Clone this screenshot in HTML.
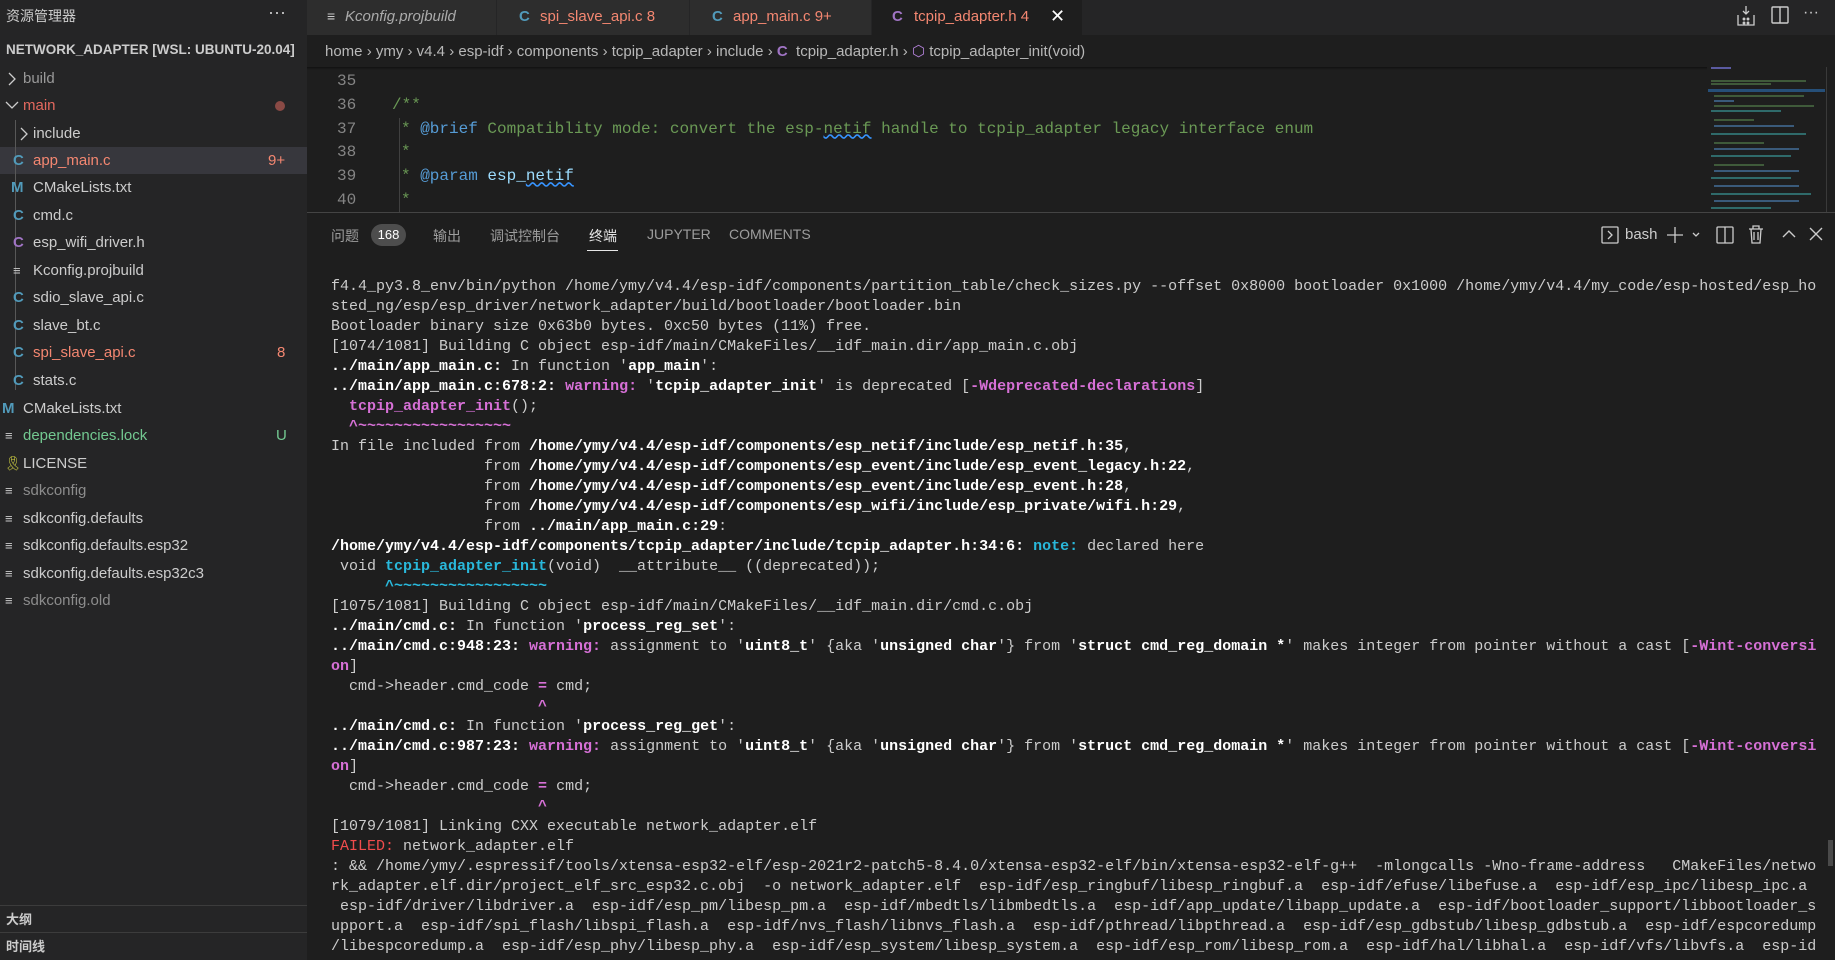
<!DOCTYPE html>
<html><head><meta charset="utf-8"><style>
*{margin:0;padding:0;box-sizing:border-box}
body{width:1835px;height:960px;background:#1e1e1e;position:relative;overflow:hidden;font-family:"Liberation Sans","Noto Sans CJK SC",sans-serif;color:#ccc}
.a{position:absolute;white-space:pre}
#side{position:absolute;left:0;top:0;width:307px;height:960px;background:#252526}
.it{position:absolute;height:27px;line-height:27px;font-size:15px;white-space:pre}
.ic{position:absolute;font-weight:bold;font-size:15px}
.mono{font-family:"Liberation Mono",monospace}
#term{position:absolute;left:331px;top:277px;font-family:"Liberation Mono",monospace;font-size:15px;line-height:20px;color:#cccccc}
#term div{white-space:pre;height:20px}
b{color:#fff}
.w{color:#d670d6;font-weight:bold}
.n{color:#29b8db;font-weight:bold}
.r{color:#f14c4c}
.tab{position:absolute;top:0;height:35px;line-height:33px;font-size:15px;background:#2d2d2d;border-right:1px solid #252526}
.pt{position:absolute;top:226px;font-size:14px;color:#9d9d9d}
.mm{position:absolute;height:2px}
.chev{position:absolute}
</style></head><body>
<div style="position:absolute;left:307px;top:0;width:1528px;height:35px;background:#252526"></div>
<div class="tab" style="left:307px;width:190px"><span class="a" style="left:20px;color:#ccc;font-size:14px">≡</span><span class="a" style="left:38px;font-style:italic;color:#aaa">Kconfig.projbuild</span></div>
<div class="tab" style="left:497px;width:193px"><span class="a" style="left:22px;color:#519aba;font-weight:bold">C</span><span class="a" style="left:43px;color:#f48771">spi_slave_api.c 8</span></div>
<div class="tab" style="left:690px;width:182px"><span class="a" style="left:22px;color:#519aba;font-weight:bold">C</span><span class="a" style="left:43px;color:#f48771">app_main.c 9+</span></div>
<div class="tab" style="left:872px;width:211px;background:#1e1e1e"><span class="a" style="left:20px;color:#a074c4;font-weight:bold">C</span><span class="a" style="left:42px;color:#f48771">tcpip_adapter.h 4</span><span class="a" style="left:178px;color:#fff;font-size:18px">✕</span></div>
<svg class="a" style="left:1736px;top:5px" width="20" height="22" viewBox="0 0 20 22" fill="none" stroke="#ccc" stroke-width="1.3"><path d="M10 1v8M7 6l3 3 3-3M2 10v10h16V10"/><circle cx="8" cy="14" r=".8" fill="#ccc"/><circle cx="12" cy="14" r=".8" fill="#ccc"/><circle cx="8" cy="18" r=".8" fill="#ccc"/><circle cx="12" cy="18" r=".8" fill="#ccc"/></svg>
<svg class="a" style="left:1771px;top:6px" width="18" height="18" viewBox="0 0 18 18" fill="none" stroke="#ccc" stroke-width="1.4"><rect x="1" y="1" width="16" height="16" rx="1"/><path d="M9 1v16"/></svg>
<div class="a" style="left:1803px;top:4px;font-size:16px;color:#ccc">···</div>
<div class="a" style="left:325px;top:42px;font-size:15px;color:#b8b8b8">home › ymy › v4.4 › esp-idf › components › tcpip_adapter › include › <span style="color:#a074c4;font-weight:bold">C</span>  tcpip_adapter.h › <span style="color:#b180d7">⬡</span> tcpip_adapter_init(void)</div>
<div style="position:absolute;left:307px;top:67px;width:1400px;height:3px;background:linear-gradient(#111,#1e1e1e)"></div>
<div class="mono" style="position:absolute;left:307px;top:70px;font-size:16px;line-height:23.8px;color:#858585">
<div class="a" style="left:30px;top:0">35</div>
<div class="a" style="left:30px;top:23.8px">36</div>
<div class="a" style="left:30px;top:47.6px">37</div>
<div class="a" style="left:30px;top:71.4px">38</div>
<div class="a" style="left:30px;top:95.2px">39</div>
<div class="a" style="left:30px;top:119px">40</div>
<div class="a" style="left:85px;top:23.8px;color:#6a9955">/**</div>
<div class="a" style="left:94px;top:47.6px;color:#6a9955">* <span style="color:#569cd6">@brief</span> Compatiblity mode: convert the esp-<span style="text-decoration:underline wavy #3794ff">netif</span> handle to tcpip_adapter legacy interface enum</div>
<div class="a" style="left:94px;top:71.4px;color:#6a9955">*</div>
<div class="a" style="left:94px;top:95.2px;color:#6a9955">* <span style="color:#569cd6">@param</span> <span style="color:#9cdcfe">esp_<span style="text-decoration:underline wavy #3794ff">netif</span></span></div>
<div class="a" style="left:94px;top:119px;color:#6a9955">*</div>
</div>
<div style="position:absolute;left:399px;top:118px;width:1px;height:94px;background:#404040"></div>
<div style="position:absolute;left:1708px;top:67px;width:127px;height:145px;background:#1e1e1e">
<div class="mm" style="left:3px;top:0;width:20px;background:#5a5aa0"></div>
<div class="mm" style="left:3px;top:13px;width:95px;background:#3f5a3a"></div>
<div class="mm" style="left:3px;top:16px;width:60px;background:#3f5a3a"></div>
<div class="mm" style="left:0;top:22px;width:117px;height:3px;background:#264f78"></div>
<div class="mm" style="left:6px;top:28px;width:90px;background:#3f5a3a"></div>
<div class="mm" style="left:6px;top:33px;width:20px;background:#3a5a7a"></div>
<div class="mm" style="left:6px;top:38px;width:100px;background:#3f5a3a"></div>
<div class="mm" style="left:3px;top:43px;width:70px;background:#2f6a6a"></div>
<div class="mm" style="left:6px;top:52px;width:40px;background:#3f5a3a"></div>
<div class="mm" style="left:6px;top:58px;width:80px;background:#3a5a7a"></div>
<div class="mm" style="left:3px;top:66px;width:95px;background:#2f6a6a"></div>
<div class="mm" style="left:6px;top:75px;width:50px;background:#3f5a3a"></div>
<div class="mm" style="left:6px;top:81px;width:85px;background:#3a5a7a"></div>
<div class="mm" style="left:3px;top:88px;width:80px;background:#2f6a6a"></div>
<div class="mm" style="left:6px;top:97px;width:50px;background:#3f5a3a"></div>
<div class="mm" style="left:6px;top:103px;width:85px;background:#3a5a7a"></div>
<div class="mm" style="left:3px;top:110px;width:80px;background:#2f6a6a"></div>
<div class="mm" style="left:6px;top:118px;width:85px;background:#3a5a7a"></div>
<div class="mm" style="left:3px;top:126px;width:100px;background:#2f6a6a"></div>
<div class="mm" style="left:6px;top:133px;width:85px;background:#3a5a7a"></div>
<div class="mm" style="left:3px;top:140px;width:60px;background:#2f6a6a"></div>
<div style="position:absolute;left:118px;top:0;width:1px;height:145px;background:#3a3a3a"></div>
</div>
<div style="position:absolute;left:307px;top:212px;width:1528px;height:1px;background:#444"></div>
<div class="pt" style="left:331px">问题</div>
<div class="a" style="left:371px;top:224px;width:35px;height:22px;border-radius:11px;background:#4d4d4d;color:#fff;font-size:13px;line-height:22px;text-align:center">168</div>
<div class="pt" style="left:433px">输出</div>
<div class="pt" style="left:490px">调试控制台</div>
<div class="pt" style="left:589px;color:#e7e7e7">终端</div>
<div style="position:absolute;left:587px;top:250px;width:31px;height:1px;background:#e7e7e7"></div>
<div class="pt" style="left:647px">JUPYTER</div>
<div class="pt" style="left:729px">COMMENTS</div>
<svg class="a" style="left:1601px;top:226px" width="18" height="18" viewBox="0 0 18 18" fill="none" stroke="#ccc" stroke-width="1.3"><rect x="1" y="1" width="16" height="16" rx="1"/><path d="M7 5l4 4-4 4"/></svg>
<div class="a" style="left:1625px;top:226px;font-size:15px;color:#ccc">bash</div>
<svg class="a" style="left:1666px;top:226px" width="40" height="18" viewBox="0 0 40 18" fill="none" stroke="#ccc" stroke-width="1.3"><path d="M9 1v16M1 9h16M27 7l3 3 3-3"/></svg>
<svg class="a" style="left:1716px;top:226px" width="18" height="18" viewBox="0 0 18 18" fill="none" stroke="#ccc" stroke-width="1.3"><rect x="1" y="1" width="16" height="16" rx="1"/><path d="M9 1v16"/></svg>
<svg class="a" style="left:1748px;top:225px" width="16" height="19" viewBox="0 0 16 19" fill="none" stroke="#ccc" stroke-width="1.3"><path d="M1 4h14M5 4V1h6v3M3 4l1 14h8l1-14M6 7v8M10 7v8"/></svg>
<svg class="a" style="left:1781px;top:228px" width="16" height="12" viewBox="0 0 16 12" fill="none" stroke="#ccc" stroke-width="1.4"><path d="M2 9l6-6 6 6"/></svg>
<svg class="a" style="left:1809px;top:227px" width="14" height="14" viewBox="0 0 14 14" fill="none" stroke="#ccc" stroke-width="1.4"><path d="M1 1l12 12M13 1L1 13"/></svg>
<div style="position:absolute;left:1828px;top:840px;width:5px;height:26px;background:#4a4a4a"></div>
<div id="term">
<div>f4.4_py3.8_env/bin/python /home/ymy/v4.4/esp-idf/components/partition_table/check_sizes.py --offset 0x8000 bootloader 0x1000 /home/ymy/v4.4/my_code/esp-hosted/esp_ho</div>
<div>sted_ng/esp/esp_driver/network_adapter/build/bootloader/bootloader.bin</div>
<div>Bootloader binary size 0x63b0 bytes. 0xc50 bytes (11%) free.</div>
<div>[1074/1081] Building C object esp-idf/main/CMakeFiles/__idf_main.dir/app_main.c.obj</div>
<div><b>../main/app_main.c:</b> In function '<b>app_main</b>':</div>
<div><b>../main/app_main.c:678:2:</b> <span class="w">warning:</span> '<b>tcpip_adapter_init</b>' is deprecated [<span class="w">-Wdeprecated-declarations</span>]</div>
<div>  <span class="w">tcpip_adapter_init</span>();</div>
<div>  <span class="w">^~~~~~~~~~~~~~~~~~</span></div>
<div>In file included from <b>/home/ymy/v4.4/esp-idf/components/esp_netif/include/esp_netif.h:35</b>,</div>
<div>                 from <b>/home/ymy/v4.4/esp-idf/components/esp_event/include/esp_event_legacy.h:22</b>,</div>
<div>                 from <b>/home/ymy/v4.4/esp-idf/components/esp_event/include/esp_event.h:28</b>,</div>
<div>                 from <b>/home/ymy/v4.4/esp-idf/components/esp_wifi/include/esp_private/wifi.h:29</b>,</div>
<div>                 from <b>../main/app_main.c:29</b>:</div>
<div><b>/home/ymy/v4.4/esp-idf/components/tcpip_adapter/include/tcpip_adapter.h:34:6:</b> <span class="n">note:</span> declared here</div>
<div> void <span class="n">tcpip_adapter_init</span>(void)  __attribute__ ((deprecated));</div>
<div>      <span class="n">^~~~~~~~~~~~~~~~~~</span></div>
<div>[1075/1081] Building C object esp-idf/main/CMakeFiles/__idf_main.dir/cmd.c.obj</div>
<div><b>../main/cmd.c:</b> In function '<b>process_reg_set</b>':</div>
<div><b>../main/cmd.c:948:23:</b> <span class="w">warning:</span> assignment to '<b>uint8_t</b>' {aka '<b>unsigned char</b>'} from '<b>struct cmd_reg_domain *</b>' makes integer from pointer without a cast [<span class="w">-Wint-conversi</span></div>
<div><span class="w">on</span>]</div>
<div>  cmd-&gt;header.cmd_code <span class="w">=</span> cmd;</div>
<div>                       <span class="w">^</span></div>
<div><b>../main/cmd.c:</b> In function '<b>process_reg_get</b>':</div>
<div><b>../main/cmd.c:987:23:</b> <span class="w">warning:</span> assignment to '<b>uint8_t</b>' {aka '<b>unsigned char</b>'} from '<b>struct cmd_reg_domain *</b>' makes integer from pointer without a cast [<span class="w">-Wint-conversi</span></div>
<div><span class="w">on</span>]</div>
<div>  cmd-&gt;header.cmd_code <span class="w">=</span> cmd;</div>
<div>                       <span class="w">^</span></div>
<div>[1079/1081] Linking CXX executable network_adapter.elf</div>
<div><span class="r">FAILED: </span>network_adapter.elf</div>
<div>: &amp;&amp; /home/ymy/.espressif/tools/xtensa-esp32-elf/esp-2021r2-patch5-8.4.0/xtensa-esp32-elf/bin/xtensa-esp32-elf-g++  -mlongcalls -Wno-frame-address   CMakeFiles/netwo</div>
<div>rk_adapter.elf.dir/project_elf_src_esp32.c.obj  -o network_adapter.elf  esp-idf/esp_ringbuf/libesp_ringbuf.a  esp-idf/efuse/libefuse.a  esp-idf/esp_ipc/libesp_ipc.a</div>
<div> esp-idf/driver/libdriver.a  esp-idf/esp_pm/libesp_pm.a  esp-idf/mbedtls/libmbedtls.a  esp-idf/app_update/libapp_update.a  esp-idf/bootloader_support/libbootloader_s</div>
<div>upport.a  esp-idf/spi_flash/libspi_flash.a  esp-idf/nvs_flash/libnvs_flash.a  esp-idf/pthread/libpthread.a  esp-idf/esp_gdbstub/libesp_gdbstub.a  esp-idf/espcoredump</div>
<div>/libespcoredump.a  esp-idf/esp_phy/libesp_phy.a  esp-idf/esp_system/libesp_system.a  esp-idf/esp_rom/libesp_rom.a  esp-idf/hal/libhal.a  esp-idf/vfs/libvfs.a  esp-id</div>
</div>
<div id="side">
<div class="a" style="left:6px;top:6px;font-size:14px;color:#ccc">资源管理器</div>
<div class="a" style="left:268px;top:2px;font-size:18px;color:#ccc">···</div>
<div class="a" style="left:6px;top:42px;font-size:13.5px;font-weight:bold;color:#ccc">NETWORK_ADAPTER [WSL: UBUNTU-20.04]</div>
<div style="position:absolute;left:0;top:147px;width:307px;height:27px;background:#37373d"></div>
<div style="position:absolute;left:15px;top:120px;width:1px;height:270px;background:#585858"></div>
<svg class="chev" style="left:6px;top:71px" width="10" height="16" viewBox="0 0 10 16" fill="none" stroke="#ccc" stroke-width="1.3"><path d="M3 2l6 6-6 6"/></svg>
<div class="it" style="left:23px;top:65px;color:#999">build</div>
<svg class="chev" style="left:4px;top:100px" width="16" height="10" viewBox="0 0 16 10" fill="none" stroke="#ccc" stroke-width="1.3"><path d="M2 2l6 6 6-6"/></svg>
<div class="it" style="left:23px;top:92px;color:#e2685e">main</div>
<div class="a" style="left:275px;top:101px;width:10px;height:10px;border-radius:5px;background:#8a4a45"></div>
<svg class="chev" style="left:18px;top:126px" width="10" height="16" viewBox="0 0 10 16" fill="none" stroke="#ccc" stroke-width="1.3"><path d="M3 2l6 6-6 6"/></svg>
<div class="it" style="left:33px;top:120px;color:#ccc">include</div>
<div class="it" style="left:13px;top:147px"><span class="ic" style="color:#519aba">C</span><span style="position:absolute;left:20px;color:#f48771">app_main.c</span></div>
<div class="it" style="left:268px;top:147px;color:#f48771">9+</div>
<div class="it" style="left:11px;top:174px"><span class="ic" style="color:#519aba">M</span><span style="position:absolute;left:22px;color:#ccc">CMakeLists.txt</span></div>
<div class="it" style="left:13px;top:202px"><span class="ic" style="color:#519aba">C</span><span style="position:absolute;left:20px;color:#ccc">cmd.c</span></div>
<div class="it" style="left:13px;top:229px"><span class="ic" style="color:#a074c4">C</span><span style="position:absolute;left:20px;color:#ccc">esp_wifi_driver.h</span></div>
<div class="it" style="left:13px;top:257px"><span style="position:absolute;color:#ccc;font-size:13px">≡</span><span style="position:absolute;left:20px;color:#ccc">Kconfig.projbuild</span></div>
<div class="it" style="left:13px;top:284px"><span class="ic" style="color:#519aba">C</span><span style="position:absolute;left:20px;color:#ccc">sdio_slave_api.c</span></div>
<div class="it" style="left:13px;top:312px"><span class="ic" style="color:#519aba">C</span><span style="position:absolute;left:20px;color:#ccc">slave_bt.c</span></div>
<div class="it" style="left:13px;top:339px"><span class="ic" style="color:#519aba">C</span><span style="position:absolute;left:20px;color:#f48771">spi_slave_api.c</span></div>
<div class="it" style="left:277px;top:339px;color:#f48771">8</div>
<div class="it" style="left:13px;top:367px"><span class="ic" style="color:#519aba">C</span><span style="position:absolute;left:20px;color:#ccc">stats.c</span></div>
<div class="it" style="left:2px;top:395px"><span class="ic" style="color:#519aba">M</span><span style="position:absolute;left:21px;color:#ccc">CMakeLists.txt</span></div>
<div class="it" style="left:5px;top:422px"><span style="position:absolute;color:#ccc;font-size:13px">≡</span><span style="position:absolute;left:18px;color:#73c991">dependencies.lock</span></div>
<div class="it" style="left:276px;top:422px;color:#73c991">U</div>
<div class="it" style="left:4px;top:450px"><span style="position:absolute;color:#cbcb41;font-size:14px">🎗</span><span style="position:absolute;left:19px;color:#ccc">LICENSE</span></div>
<div class="it" style="left:5px;top:477px"><span style="position:absolute;color:#ccc;font-size:13px">≡</span><span style="position:absolute;left:18px;color:#8c8c8c">sdkconfig</span></div>
<div class="it" style="left:5px;top:505px"><span style="position:absolute;color:#ccc;font-size:13px">≡</span><span style="position:absolute;left:18px;color:#ccc">sdkconfig.defaults</span></div>
<div class="it" style="left:5px;top:532px"><span style="position:absolute;color:#ccc;font-size:13px">≡</span><span style="position:absolute;left:18px;color:#ccc">sdkconfig.defaults.esp32</span></div>
<div class="it" style="left:5px;top:560px"><span style="position:absolute;color:#ccc;font-size:13px">≡</span><span style="position:absolute;left:18px;color:#ccc">sdkconfig.defaults.esp32c3</span></div>
<div class="it" style="left:5px;top:587px"><span style="position:absolute;color:#ccc;font-size:13px">≡</span><span style="position:absolute;left:18px;color:#8c8c8c">sdkconfig.old</span></div>
<div style="position:absolute;left:0;top:905px;width:307px;height:1px;background:#3c3c3c"></div>
<div class="a" style="left:6px;top:909px;font-size:13px;font-weight:bold;color:#ccc">大纲</div>
<div style="position:absolute;left:0;top:932px;width:307px;height:1px;background:#3c3c3c"></div>
<div class="a" style="left:6px;top:936px;font-size:13px;font-weight:bold;color:#ccc">时间线</div>
</div>
</body></html>
